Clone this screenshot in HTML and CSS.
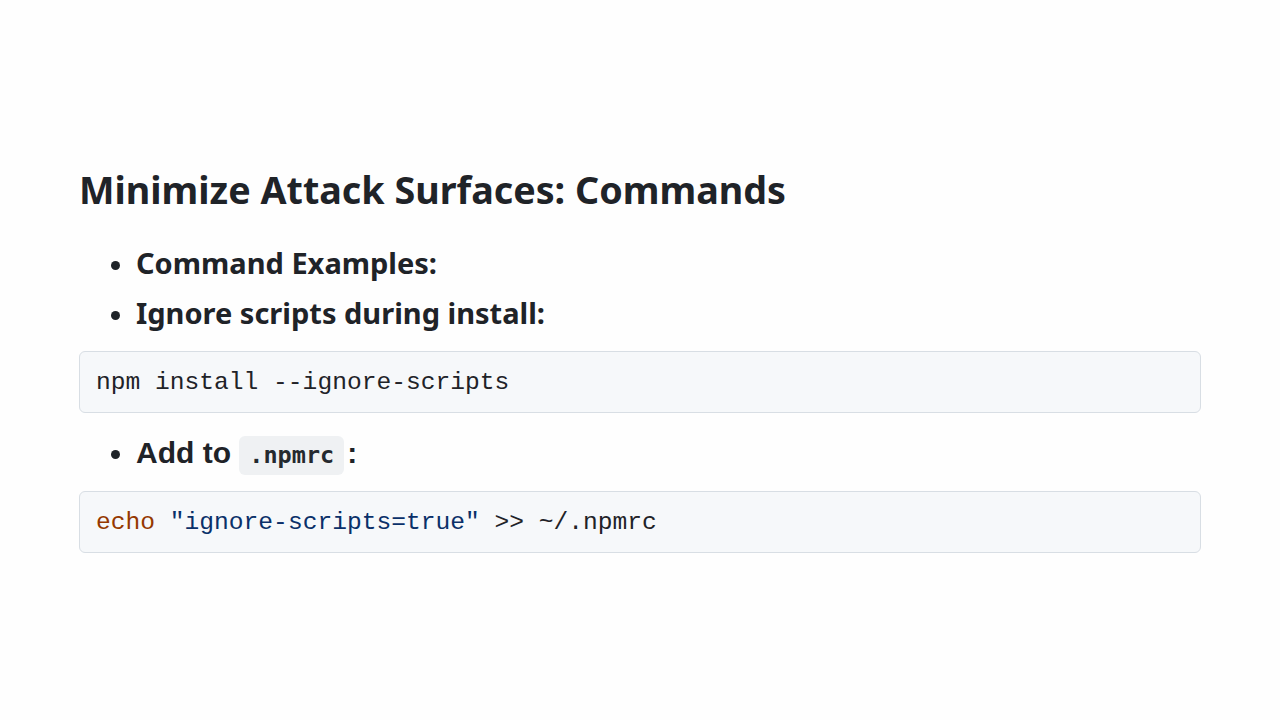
FILE: index.html
```html
<!DOCTYPE html>
<html lang="en">
<head>
<meta charset="utf-8">
<title>Minimize Attack Surfaces: Commands</title>
<link rel="stylesheet" href="styles.css">
</head>
<body>
<main class="slide">
  <h1 class="title">Minimize Attack Surfaces: Commands</h1>
  <ul class="points first">
    <li><strong>Command Examples:</strong></li>
    <li><strong>Ignore scripts during install:</strong></li>
  </ul>
  <pre class="code"><code>npm install --ignore-scripts</code></pre>
  <ul class="points">
    <li><strong class="alt">Add to <code class="inline">.npmrc</code>:</strong></li>
  </ul>
  <pre class="code last"><code><span class="kw">echo</span> <span class="str">"ignore-scripts=true"</span> &gt;&gt; ~/.npmrc</code></pre>
</main>
</body>
</html>
```

FILE: styles.css
```css
html, body {
  margin: 0;
  padding: 0;
  background: #fefefe;
}
body {
  width: 1280px;
  height: 720px;
  overflow: hidden;
  font-family: "Noto Sans", "Open Sans", sans-serif;
  color: #1f2328;
}
.slide {
  padding: 160px 79px 0 79px;
  display: flex;
  flex-direction: column;
}
.title {
  margin: 0;
  font-size: 37.7px;
  font-weight: 700;
  line-height: 60px;
}
.points {
  margin: 0;
  padding-left: 57px;
  font-size: 29px;
  line-height: 50px;
}
.points.first {
  margin-top: 18px;
}
.points li::marker {
  font-size: 26px;
}
.alt {
  font-family: "Liberation Sans", Arial, sans-serif;
  font-size: 30px;
}
.code {
  margin: 13px 0 14px;
  padding: 0 16px;
  height: 60px;
  display: flex;
  align-items: center;
  background: #f6f8fa;
  border: 1px solid #d8dee4;
  border-radius: 6px;
  font-family: "Liberation Mono", monospace;
  font-size: 24.6px;
  color: #1f2328;
}
.code.last {
  margin-top: 11px;
}
.code code {
  font-family: inherit;
}
.kw { color: #953800; }
.str { color: #0a3069; }
.inline {
  font-family: "DejaVu Sans Mono", monospace;
  font-size: 23.5px;
  font-weight: 700;
  color: #24292f;
  background: #eff1f3;
  border-radius: 6px;
  padding: 5px 10px 6px;
  margin-right: 3px;
}
```
